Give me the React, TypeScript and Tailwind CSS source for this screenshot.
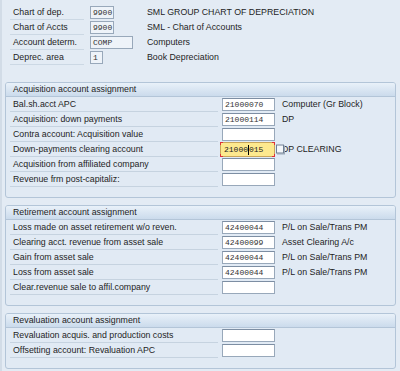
import React from "react";

const font = "font-['Liberation_Sans',Arial,sans-serif]";
const mono = "font-['Liberation_Mono','Courier_New',monospace]";

type Row = { label: string; value?: string; desc?: string; focus?: boolean };

function Input({ value, focus }: { value?: string; focus?: boolean }) {
  if (focus) {
    return (
      <div className="relative h-[15px] w-[55px] -ml-[2px] border border-[#c9a65a] bg-[#fde98e] flex items-center">
        <span className={`${mono} text-[8px] leading-none text-[#222] pl-[3px]`}>
          21000
        </span>
        <span className="w-px h-[10px] bg-black" />
        <span className={`${mono} text-[8px] leading-none text-[#222]`}>015</span>
        <span className="absolute -left-px -top-px w-[3px] h-px bg-[#e0303a]" />
        <span className="absolute -left-px -top-px w-px h-[3px] bg-[#e0303a]" />
        <span className="absolute -right-px -top-px w-[3px] h-px bg-[#e0303a]" />
        <span className="absolute -right-px -top-px w-px h-[3px] bg-[#e0303a]" />
        <span className="absolute -left-px -bottom-px w-[3px] h-px bg-[#e0303a]" />
        <span className="absolute -left-px -bottom-px w-px h-[3px] bg-[#e0303a]" />
        <span className="absolute -right-px -bottom-px w-[3px] h-px bg-[#e0303a]" />
        <span className="absolute -right-px -bottom-px w-px h-[3px] bg-[#e0303a]" />
      </div>
    );
  }
  return (
    <div className="h-[13px] w-[53px] border border-[#98a8ba] border-t-[#7d8ea3] bg-white flex items-center">
      <span className={`${mono} text-[8px] leading-none text-[#333] pl-[2px]`}>{value}</span>
    </div>
  );
}

function Group({ title, rows }: { title: string; rows: Row[] }) {
  return (
    <div className="ml-[5px] w-[391px] border border-[#b3c5d8] rounded-[3px] bg-[#e1eaf4] pb-[10px]">
      <div className="h-[14px] bg-gradient-to-b from-[#e9f1f9] to-[#cbdbec] border-b border-[#b3c5d8] flex items-center pl-[7px] rounded-t-[2px]">
        <span className="text-[8.8px] text-[#1e1e1e] leading-none">{title}</span>
      </div>
      {rows.map((r, i) => (
        <div key={i} className="h-[15px] flex items-center">
          <div className="ml-[4px] w-[208px] h-[15px] border-b border-[#c6d3e0] flex items-center pl-[3px]">
            <span className="text-[8.8px] text-[#1e1e1e] leading-none whitespace-nowrap">{r.label}</span>
          </div>
          <div className="ml-[4px] w-[60px] flex items-center">
            <Input value={r.value} focus={r.focus} />
          </div>
          <div className="relative flex items-center">
            <span className="text-[8.8px] text-[#1e1e1e] leading-none whitespace-nowrap">{r.desc}</span>
            {r.focus && (
              <span className="absolute -left-[6px] top-1/2 -translate-y-1/2 w-[8px] h-[9px] bg-[#f4f7fa] border border-[#6f7f93] shadow-[1px_1px_0_#9aa8b8]" />
            )}
          </div>
        </div>
      ))}
    </div>
  );
}

const topRows = [
  { label: "Chart of dep.", value: "9900", w: "w-[24px]", desc: "SML GROUP CHART OF DEPRECIATION" },
  { label: "Chart of Accts", value: "9900", w: "w-[24px]", desc: "SML - Chart of Accounts" },
  { label: "Account determ.", value: "COMP", w: "w-[43px]", desc: "Computers" },
  { label: "Deprec. area", value: "1", w: "w-[13px]", desc: "Book Depreciation" },
];

export default function App() {
  return (
    <div className={`${font} w-[400px] h-[371px] bg-[#e3ebf4] overflow-hidden relative`}>
      <div className="absolute left-0 top-0 w-[2px] h-full bg-[#d2dce7]" />
      <div className="pt-[5px]">
        {topRows.map((r, i) => (
          <div key={i} className="h-[15px] flex items-center">
            <div className="ml-[10px] w-[74px] h-[14px] border-b border-[#ccd8e4] flex items-center pl-[3px]">
              <span className="text-[8.8px] text-[#1e1e1e] leading-none whitespace-nowrap">{r.label}</span>
            </div>
            <div className="ml-[6px] w-[57px] flex items-center">
              <div className={`${r.w} h-[13px] border border-[#98a8ba] bg-[#eef3f9] flex items-center`}>
                <span className={`${mono} text-[8px] leading-none text-[#333] pl-[2px]`}>{r.value}</span>
              </div>
            </div>
            <span className="text-[8.8px] text-[#1e1e1e] leading-none whitespace-nowrap">{r.desc}</span>
          </div>
        ))}
      </div>
      <div className="mt-[17px]">
        <Group
          title="Acquisition account assignment"
          rows={[
            { label: "Bal.sh.acct APC", value: "21000070", desc: "Computer (Gr Block)" },
            { label: "Acquisition: down payments", value: "21000114", desc: "DP" },
            { label: "Contra account: Acquisition value" },
            { label: "Down-payments clearing account", focus: true, desc: "DP CLEARING" },
            { label: "Acquisition from affiliated company" },
            { label: "Revenue frm post-capitaliz:" },
          ]}
        />
      </div>
      <div className="mt-[7px]">
        <Group
          title="Retirement account assignment"
          rows={[
            { label: "Loss made on asset retirement w/o reven.", value: "42400044", desc: "P/L on Sale/Trans PM" },
            { label: "Clearing acct. revenue from asset sale", value: "42400099", desc: "Asset Clearing A/c" },
            { label: "Gain from asset sale", value: "42400044", desc: "P/L on Sale/Trans PM" },
            { label: "Loss from asset sale", value: "42400044", desc: "P/L on Sale/Trans PM" },
            { label: "Clear.revenue sale to affil.company" },
          ]}
        />
      </div>
      <div className="mt-[7px]">
        <Group
          title="Revaluation account assignment"
          rows={[
            { label: "Revaluation acquis. and production costs" },
            { label: "Offsetting account: Revaluation APC" },
          ]}
        />
      </div>
    </div>
  );
}
